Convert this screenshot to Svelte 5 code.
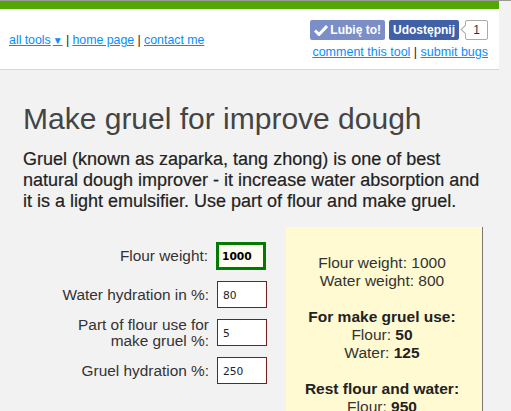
<script>
  let flour = 1000;
  let hydration = 80;
  let part = 5;
  let gruelHydration = 250;

  const fields = [
    { label: 'Flour weight:', value: flour, main: true },
    { label: 'Water hydration in %:', value: hydration },
    { label: 'Part of flour use for make gruel %:', value: part },
    { label: 'Gruel hydration %:', value: gruelHydration }
  ];
</script>

<div class="page">
  <header class="top">
    <nav class="links main-links">
      <a href="#tools">all tools<span class="arrow">▼</span></a> | <a href="#home">home page</a> | <a href="#contact">contact me</a>
    </nav>
    <div class="right">
      <div class="social">
        <span class="fb like">
          <svg viewBox="0 0 14 12" width="14" height="12"><path d="M1 6.5 L5 10.5 L13 2" fill="none" stroke="#fff" stroke-width="3" /></svg>
          Lubię to!
        </span>
        <span class="fb share">Udostępnij</span>
        <span class="count">1</span>
      </div>
      <div class="links"><a href="#comment">comment this tool</a> | <a href="#bugs">submit bugs</a></div>
    </div>
  </header>

  <main class="content">
    <h1>Make gruel for improve dough</h1>
    <p class="intro">Gruel (known as zaparka, tang zhong) is one of best natural dough improver - it increase water absorption and it is a light emulsifier. Use part of flour and make gruel.</p>

    <div class="tool">
      <form class="fields">
        {#each fields as f}
          <label class="row">
            <span class="name">{f.label}</span>
            <input class:main={f.main} type="text" value={f.value} />
          </label>
        {/each}
      </form>
      <aside class="result">
        <p>Flour weight: 1000<br />Water weight: 800</p>
        <p><b>For make gruel use:</b><br />Flour: <b>50</b><br />Water: <b>125</b></p>
        <p><b>Rest flour and water:</b><br />Flour: <b>950</b></p>
      </aside>
    </div>
  </main>
</div>

<style>
  :global(html), :global(body) {
    height: 411px;
    overflow: hidden;
  }

  :global(body) {
    background: #f3f2f2;
    font-family: "Liberation Sans", Arial, sans-serif;
    color: #333;
    border-top: 1px solid #999;
    box-sizing: border-box;
  }

  .page {
    width: 499px;
  }

  .top {
    box-sizing: border-box;
    height: 69px;
    background: #fff;
    border-top: 8px solid #52a800;
    border-bottom: 1px solid #d8d8d8;
    display: flex;
    justify-content: space-between;
    padding: 11px 10px 0 9px;
  }

  .links {
    font-size: 12.5px;
    line-height: 16px;
    color: #222;
    padding-top: 12px;
  }

  .main-links {
    font-size: 12.4px;
    word-spacing: -0.2px;
  }

  .links a {
    color: #0a8cff;
    text-decoration: underline;
  }

  .arrow {
    font-size: 10px;
    margin-left: 2px;
  }

  .right {
    display: flex;
    flex-direction: column;
    align-items: flex-end;
  }

  .right .links {
    padding-top: 4px;
    margin-right: 1px;
  }

  .social {
    display: flex;
    align-items: center;
    height: 20px;
    margin-right: 1px;
  }

  .fb {
    height: 20px;
    border-radius: 2px;
    color: #fff;
    font-size: 12px;
    font-weight: bold;
    line-height: 20px;
    padding: 0 4px;
    display: flex;
    align-items: center;
    gap: 2px;
    white-space: nowrap;
  }

  .like {
    background: #7b8fc6;
    margin-right: 4px;
  }

  .share {
    background: #4060a8;
  }

  .count {
    position: relative;
    box-sizing: border-box;
    height: 20px;
    width: 23px;
    margin-left: 6px;
    border: 1px solid #aaa;
    border-radius: 2px;
    background: #fff;
    text-align: center;
    font-size: 12px;
    line-height: 18px;
    color: #333;
  }

  .count::before {
    content: "";
    position: absolute;
    left: -4px;
    top: 5px;
    width: 6px;
    height: 6px;
    background: #fff;
    border-left: 1px solid #aaa;
    border-bottom: 1px solid #aaa;
    transform: rotate(45deg);
  }

  .content {
    padding: 0 0 0 23px;
  }

  h1 {
    margin: 0;
    padding-top: 31px;
    font-size: 30px;
    line-height: 36px;
    font-weight: normal;
    color: #444;
  }

  .intro {
    margin: 12px 0 0;
    font-size: 18px;
    line-height: 21px;
    color: #222;
    width: 460px;
    -webkit-text-stroke: 0.2px #222;
  }

  .tool {
    display: flex;
    margin-top: 15px;
  }

  .fields {
    box-sizing: border-box;
    width: 263px;
    padding: 15px 19px 0 0;
    display: flex;
    flex-direction: column;
    gap: 11px;
  }

  .row {
    display: flex;
    align-items: center;
    justify-content: flex-end;
    gap: 8px;
    height: 27px;
    font-size: 15.4px;
    line-height: 16px;
    color: #333;
  }

  .row:first-child {
    height: 28px;
  }

  .name {
    width: 150px;
    text-align: right;
  }

  input {
    box-sizing: border-box;
    flex: none;
    width: 50px;
    height: 27px;
    border: 1px solid #702020;
    background: #fff;
    padding: 1px 5px 0;
    font-family: "DejaVu Sans", sans-serif;
    font-size: 10.7px;
    color: #222;
    border-radius: 0;
    outline: none;
  }

  input.main {
    height: 28px;
    margin-right: 1px;
    border: 3px solid #007a00;
    background: #fffdf0;
    font-weight: bold;
    color: #000;
    padding: 0 3px;
  }

  .result {
    box-sizing: border-box;
    width: 197px;
    height: 300px;
    background: #fffad2;
    border-right: 1px solid #777;
    padding: 27px 4px 0 0;
    text-align: center;
    font-size: 15.5px;
    line-height: 18px;
    color: #333;
  }

  .result p {
    margin: 0 0 18px;
  }

  .result b {
    color: #222;
  }
</style>
